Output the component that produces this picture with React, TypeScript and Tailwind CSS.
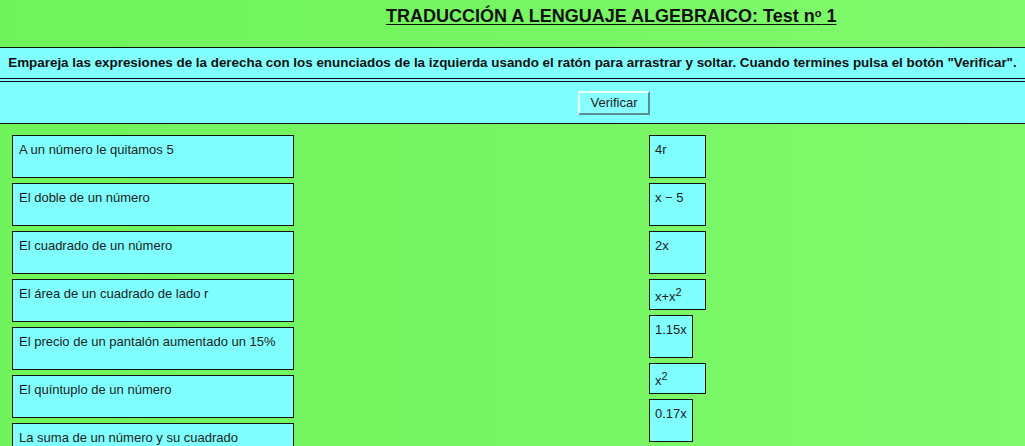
const leftItems = [
  "A un número le quitamos 5",
  "El doble de un número",
  "El cuadrado de un número",
  "El área de un cuadrado de lado r",
  "El precio de un pantalón aumentado un 15%",
  "El quíntuplo de un número",
  "La suma de un número y su cuadrado",
];

type Piece = { key: string; label: React.ReactNode; narrow?: boolean; short?: boolean };

const rightItems: Piece[] = [
  { key: "4r", label: "4r" },
  { key: "x-5", label: "x − 5" },
  { key: "2x", label: "2x" },
  {
    key: "x+x2",
    label: (
      <>
        x+x<sup className="text-[11px]">2</sup>
      </>
    ),
    short: true,
  },
  { key: "1.15x", label: "1.15x", narrow: true },
  {
    key: "x2",
    label: (
      <>
        x<sup className="text-[11px]">2</sup>
      </>
    ),
    short: true,
  },
  { key: "0.17x", label: "0.17x", narrow: true },
];

export default function App() {
  return (
    <div className="min-h-screen bg-gradient-to-r from-[#6ff45b] via-[#76f662] to-[#80f96c] font-['Liberation_Sans',Arial,sans-serif] text-[#1c1c1c]">
      <div className="h-[47px] pl-[386px] pt-[6px]">
        <h1 className="text-[18px] font-bold leading-[20px] underline underline-offset-[2px] text-[#111]">
          TRADUCCIÓN A LENGUAJE ALGEBRAICO: Test n<sup className="text-[11px]">o</sup> 1
        </h1>
      </div>

      <div className="bg-[#80ffff]">
        <div className="flex h-[32px] items-center justify-center border-y border-[#111] text-[13.4px] font-bold text-[#111]">
          Empareja las expresiones de la derecha con los enunciados de la izquierda usando el ratón para arrastrar y soltar. Cuando termines pulsa el botón "Verificar".
        </div>
        <div className="mt-[2px] flex h-[43px] items-center border-y border-[#111] pl-[578px]">
          <button className="h-[24px] w-[72px] border-2 border-t-[#e8ffff] border-l-[#e8ffff] border-r-[#5a8f8f] border-b-[#5a8f8f] bg-[#88ffff] text-[13px] text-[#222]">
            Verificar
          </button>
        </div>
      </div>

      <div className="flex pl-[12px] pt-[11px]">
        <div className="flex w-[282px] flex-col gap-[5px]">
          {leftItems.map((t) => (
            <div
              key={t}
              className="h-[43px] border border-[#111] bg-[#80ffff] px-[6px] pt-[6px] text-[13px] leading-[15px]"
            >
              {t}
            </div>
          ))}
        </div>
        <div className="ml-[355px] flex flex-col gap-[5px]">
          {rightItems.map((p) => (
            <div
              key={p.key}
              className={`border border-[#111] bg-[#80ffff] px-[5px] text-[13px] leading-[15px] ${
                p.narrow ? "w-[44px]" : "w-[57px]"
              } ${p.short ? "h-[31px] pt-[9px]" : "h-[43px] pt-[6px]"}`}
            >
              {p.label}
            </div>
          ))}
        </div>
      </div>
    </div>
  );
}
